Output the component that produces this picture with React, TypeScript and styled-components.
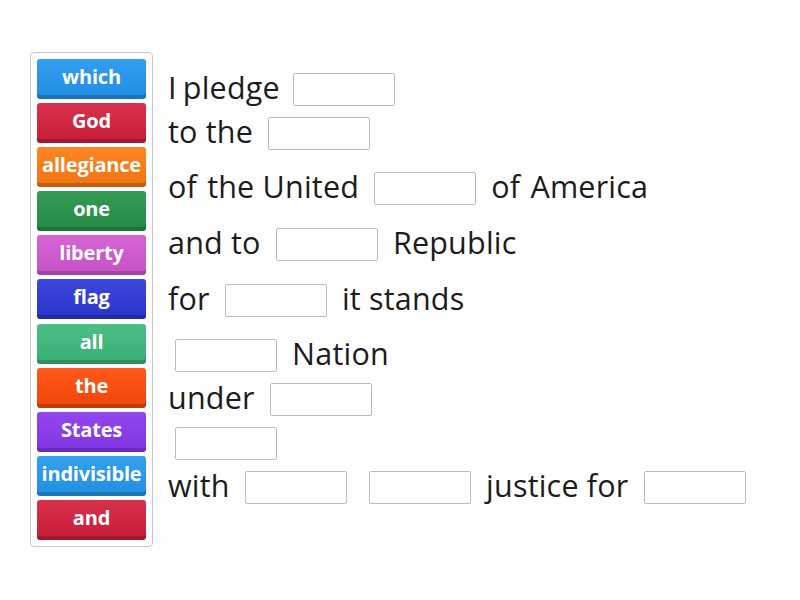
import React from "react";
import styled, { createGlobalStyle } from "styled-components";

const Global = createGlobalStyle`
  html, body { margin: 0; padding: 0; background: #fff; }
  body { font-family: "Open Sans", "Noto Sans", sans-serif; }
`;

const Page = styled.div`
  display: flex;
  align-items: flex-start;
  padding: 52px 0 0 30px;
  width: 800px;
  height: 600px;
  box-sizing: border-box;
`;

const Bank = styled.div`
  display: flex;
  flex-direction: column;
  gap: 4.1px;
  padding: 6px;
  border: 1px solid #c8c8c8;
  border-radius: 4px;
  width: 123px;
  box-sizing: border-box;
`;

const Tile = styled.div<{ $bg: string }>`
  height: 40px;
  box-sizing: border-box;
  padding-bottom: 5px;
  display: flex;
  align-items: center;
  justify-content: center;
  border-radius: 3px;
  background: ${(p) => p.$bg};
  background-image: linear-gradient(rgba(255, 255, 255, 0.08), rgba(0, 0, 0, 0.06));
  box-shadow: inset 0 -4px 0 rgba(0, 0, 0, 0.18);
  color: #fff;
  font-weight: 700;
  font-size: 20px;
  letter-spacing: -0.2px;
  white-space: nowrap;
`;

const Sentence = styled.div`
  margin-left: 15px;
  display: flex;
  flex-direction: column;
`;

const Row = styled.div<{ $top: number; $ws?: number }>`
  margin-top: ${(p) => p.$top}px;
  height: 33px;
  line-height: 28px;
  font-size: 30.5px;
  letter-spacing: 0.2px;
  word-spacing: ${(p) => p.$ws ?? 0}px;
  color: #1c1c1c;
  white-space: pre;
`;

const Gap = styled.span`
  display: inline-block;
  width: 2px;
`;

const Blank = styled.span`
  display: inline-block;
  vertical-align: top;
  width: 102px;
  height: 33px;
  box-sizing: border-box;
  margin: 0 7px;
  border: 1px solid #bdbdbd;
  border-radius: 2px;
  background: #fff;
`;

const words: [string, string][] = [
  ["which", "#2196ef"],
  ["God", "#d51f3c"],
  ["allegiance", "#ff7b10"],
  ["one", "#249347"],
  ["liberty", "#d257d2"],
  ["flag", "#2b38d8"],
  ["all", "#3cb97b"],
  ["the", "#ff4a08"],
  ["States", "#8937ef"],
  ["indivisible", "#2398ee"],
  ["and", "#d51f3c"],
];

export default function App() {
  return (
    <>
      <Global />
      <Page>
        <Bank>
          {words.map(([w, c]) => (
            <Tile key={w} $bg={c}>
              {w}
            </Tile>
          ))}
        </Bank>
        <Sentence>
          <Row $top={21} $ws={-2}>
            I pledge <Blank />
          </Row>
          <Row $top={11}>
            to the <Blank />
          </Row>
          <Row $top={22}>
            of<Gap /> the United <Blank /> of<Gap /> America
          </Row>
          <Row $top={23}>
            and to <Blank /> Republic
          </Row>
          <Row $top={23}>
            for <Blank /> it stands
          </Row>
          <Row $top={22}>
            <Blank /> Nation
          </Row>
          <Row $top={11}>
            under <Blank />
          </Row>
          <Row $top={11}>
            <Blank />
          </Row>
          <Row $top={11}>
            with <Blank /> <Blank /> justice for <Blank />
          </Row>
        </Sentence>
      </Page>
    </>
  );
}
